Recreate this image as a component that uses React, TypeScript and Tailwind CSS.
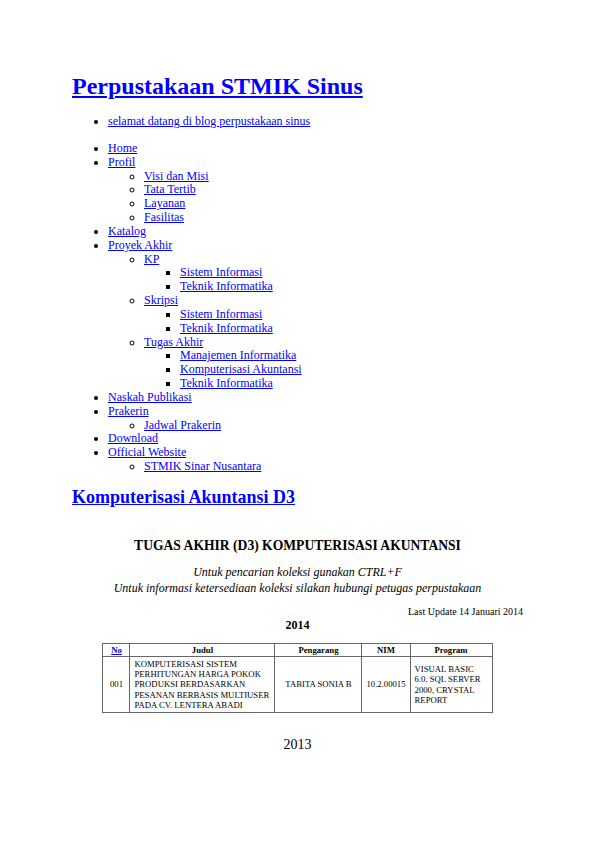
const link = 'text-[#0000ff] underline';

type Item = { label: string; children?: Item[] };

const menu: Item[] = [
  { label: 'Home' },
  {
    label: 'Profil',
    children: [{ label: 'Visi dan Misi' }, { label: 'Tata Tertib' }, { label: 'Layanan' }, { label: 'Fasilitas' }],
  },
  { label: 'Katalog' },
  {
    label: 'Proyek Akhir',
    children: [
      { label: 'KP', children: [{ label: 'Sistem Informasi' }, { label: 'Teknik Informatika' }] },
      { label: 'Skripsi', children: [{ label: 'Sistem Informasi' }, { label: 'Teknik Informatika' }] },
      {
        label: 'Tugas Akhir',
        children: [
          { label: 'Manajemen Informatika' },
          { label: 'Komputerisasi Akuntansi' },
          { label: 'Teknik Informatika' },
        ],
      },
    ],
  },
  { label: 'Naskah Publikasi' },
  { label: 'Prakerin', children: [{ label: 'Jadwal Prakerin' }] },
  { label: 'Download' },
  { label: 'Official Website', children: [{ label: 'STMIK Sinar Nusantara' }] },
];

function Menu({ items, depth }: { items: Item[]; depth: number }) {
  const style = depth === 0 ? 'list-disc' : depth === 1 ? 'list-[circle]' : 'list-[square]';
  return (
    <ul className={`${style} pl-[36px]`}>
      {items.map((it, i) => (
        <li key={i}>
          <a href="#" className={link}>
            {it.label}
          </a>
          {it.children && <Menu items={it.children} depth={depth + 1} />}
        </li>
      ))}
    </ul>
  );
}

export default function App() {
  const th = 'border border-[#666] font-bold text-center py-[1px]';
  const td = 'border border-[#666] px-[4px] py-[2px]';
  return (
    <div className="min-h-screen bg-white px-[72px] pt-[72px] pb-10 text-black font-['Liberation_Serif',serif] text-[12px] leading-[14px]">
      <h1 className="text-[24px] leading-[28px] font-bold">
        <a href="#" className={link}>
          Perpustakaan STMIK Sinus
        </a>
      </h1>

      <ul className="list-disc pl-[36px] mt-[14px]">
        <li>
          <a href="#" className={link}>
            selamat datang di blog perpustakaan sinus
          </a>
        </li>
      </ul>

      <div className="mt-[14px] leading-[13.83px]">
        <Menu items={menu} depth={0} />
      </div>

      <h2 className="mt-[13px] text-[18px] leading-[21px] font-bold">
        <a href="#" className={link}>
          Komputerisasi Akuntansi D3
        </a>
      </h2>

      <div className="mt-[30px] text-center text-[13.6px] leading-[16px] font-bold">
        TUGAS AKHIR (D3) KOMPUTERISASI AKUNTANSI
      </div>

      <div className="mt-[10px] text-center italic leading-[16px]">
        <div>Untuk pencarian koleksi gunakan CTRL+F</div>
        <div>Untuk informasi ketersediaan koleksi silakan hubungi petugas perpustakaan</div>
      </div>

      <div className="mt-[10px] text-right text-[10px] leading-[12px]">Last Update 14 Januari 2014</div>
      <div className="text-center font-bold leading-[14px]">2014</div>

      <div className="mt-[11px] flex justify-center">
        <table className="border-collapse border border-[#666] text-[8.7px] leading-[10.2px]">
          <thead>
            <tr>
              <th className={`${th} w-[27px]`}>
                <a href="#" className={link}>
                  No
                </a>
              </th>
              <th className={`${th} w-[145px]`}>Judul</th>
              <th className={`${th} w-[87px]`}>Pengarang</th>
              <th className={`${th} w-[48px]`}>NIM</th>
              <th className={`${th} w-[82px]`}>Program</th>
            </tr>
          </thead>
          <tbody>
            <tr>
              <td className={`${td} text-center`}>001</td>
              <td className={td}>
                KOMPUTERISASI SISTEM PERHITUNGAN HARGA POKOK PRODUKSI BERDASARKAN PESANAN BERBASIS MULTIUSER
                PADA CV. LENTERA ABADI
              </td>
              <td className={`${td} text-center`}>TABITA SONIA B</td>
              <td className={`${td} text-center`}>10.2.00015</td>
              <td className={td}>VISUAL BASIC 6.0, SQL SERVER 2000, CRYSTAL REPORT</td>
            </tr>
          </tbody>
        </table>
      </div>

      <div className="mt-[24px] text-center text-[14px] leading-[16px]">2013</div>
    </div>
  );
}
